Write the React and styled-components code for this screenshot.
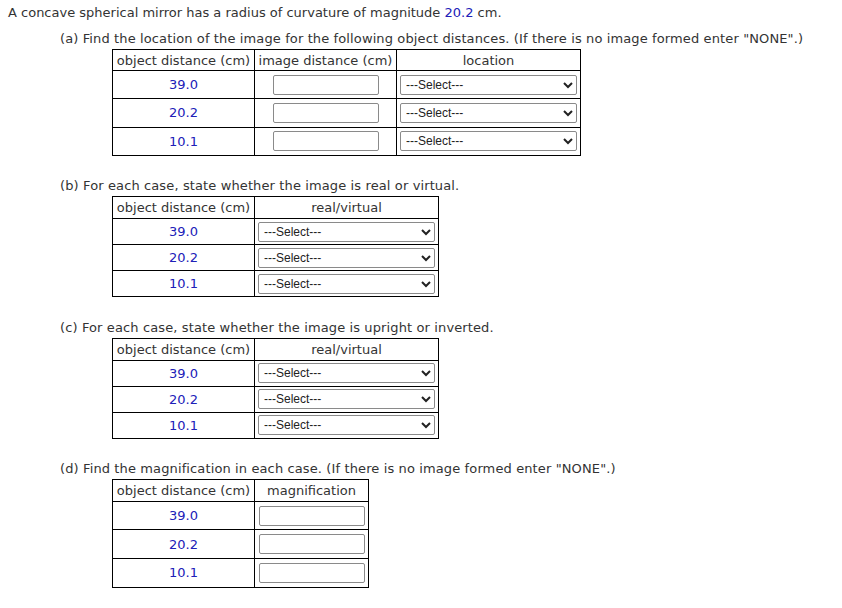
import React from "react";
import styled, { createGlobalStyle } from "styled-components";

const Global = createGlobalStyle`
  body {
    margin: 0;
    background: #fff;
    font-family: "DejaVu Sans", Verdana, sans-serif;
    font-size: 13px;
    color: #333;
  }
`;

const Page = styled.div`
  padding: 4px 0 0 8px;
`;

const Intro = styled.p`
  margin: 0;
  line-height: 17px;
`;

const Part = styled.div`
  padding-left: 52px;
  margin-top: ${(p) => p.$top}px;
`;

const Prompt = styled.p`
  margin: 0 0 2px;
  line-height: 17px;
  letter-spacing: 0.12px;
`;

const Table = styled.table`
  margin-left: 52px;
  border-collapse: collapse;
  border: 1px solid #000;
`;

const Head = styled.th`
  font-weight: normal;
  border: 1px solid #000;
  height: ${(p) => p.$h}px;
  padding: 0 3px;
  width: ${(p) => p.$w}px;
  box-sizing: border-box;
  text-align: center;
  white-space: nowrap;
`;

const Cell = styled.td`
  border: 1px solid #000;
  height: ${(p) => p.$h}px;
  padding: 0 3px;
  text-align: center;
  white-space: nowrap;
`;

const Given = styled.span`
  color: #2020b8;
`;

const Entry = styled.input`
  width: 106px;
  height: 20px;
  box-sizing: border-box;
  border: 1px solid #8a8a8a;
  border-radius: 2px;
  margin: 0 auto;
  display: block;
  font: inherit;
`;

const Drop = styled.select`
  width: 177px;
  height: 20px;
  box-sizing: border-box;
  border: 1px solid #8a8a8a;
  border-radius: 2px;
  font-family: "Liberation Sans", Arial, sans-serif;
  font-size: 12px;
  color: #222;
  background: #fff;
  padding: 0 1px;
  display: block;
  margin: 0 auto;
`;

const distances = ["39.0", "20.2", "10.1"];

function Choice() {
  return (
    <Drop defaultValue="">
      <option value="">---Select---</option>
    </Drop>
  );
}

// two-column table: object distance plus one answer column
function PairTable({ label, width, head, row, children }) {
  return (
    <Table>
      <thead>
        <tr>
          <Head $w={142} $h={head}>object distance (cm)</Head>
          <Head $w={width} $h={head}>{label}</Head>
        </tr>
      </thead>
      <tbody>
        {distances.map((d) => (
          <tr key={d}>
            <Cell $h={row}><Given>{d}</Given></Cell>
            <Cell $h={row}>{children}</Cell>
          </tr>
        ))}
      </tbody>
    </Table>
  );
}

export default function App() {
  return (
    <Page>
      <Global />
      <Intro>
        A concave spherical mirror has a radius of curvature of magnitude <Given>20.2</Given> cm.
      </Intro>

      <Part $top={9}>
        <Prompt>
          (a) Find the location of the image for the following object distances. (If there is no image formed enter "NONE".)
        </Prompt>
        <Table>
          <thead>
            <tr>
              <Head $w={142} $h={21}>object distance (cm)</Head>
              <Head $w={142} $h={21}>image distance (cm)</Head>
              <Head $w={181} $h={21}>location</Head>
            </tr>
          </thead>
          <tbody>
            {distances.map((d) => (
              <tr key={d}>
                <Cell $h={27.3}><Given>{d}</Given></Cell>
                <Cell $h={27.3}><Entry type="text" /></Cell>
                <Cell $h={27.3}><Choice /></Cell>
              </tr>
            ))}
          </tbody>
        </Table>
      </Part>

      <Part $top={21.5}>
        <Prompt>(b) For each case, state whether the image is real or virtual.</Prompt>
        <PairTable label="real/virtual" width={183} head={22} row={25}>
          <Choice />
        </PairTable>
      </Part>

      <Part $top={21.5}>
        <Prompt>(c) For each case, state whether the image is upright or inverted.</Prompt>
        <PairTable label="real/virtual" width={183} head={22} row={25}>
          <Choice />
        </PairTable>
      </Part>

      <Part $top={21}>
        <Prompt>(d) Find the magnification in each case. (If there is no image formed enter "NONE".)</Prompt>
        <PairTable label="magnification" width={114} head={22} row={27.6}>
          <Entry type="text" />
        </PairTable>
      </Part>
    </Page>
  );
}
